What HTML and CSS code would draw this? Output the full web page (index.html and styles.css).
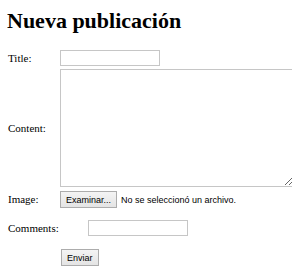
FILE: index.html
```html
<!DOCTYPE html>
<html lang="es">
<head>
    <meta charset="UTF-8">
    <title>Nueva publicación</title>
    <link rel="stylesheet" href="styles.css">
</head>
<body>
    <h1>Nueva publicación</h1>

    <form class="post-form">
        <div class="fields">
            <label for="title">Title:</label>
            <input type="text" id="title" class="text-input">

            <label for="content">Content:</label>
            <textarea id="content"></textarea>

            <label>Image:</label>
            <div class="file-pick">
                <button type="button" class="btn">Examinar...</button>
                <span class="file-name">No se seleccionó un archivo.</span>
            </div>
        </div>

        <div class="comments-row">
            <label for="comments">Comments:</label>
            <input type="text" id="comments" class="text-input">
        </div>

        <div class="submit-row">
            <button type="submit" class="btn">Enviar</button>
        </div>
    </form>
</body>
</html>
```

FILE: styles.css
```css
body {
    font-family: "Liberation Serif", "Times New Roman", serif;
    font-size: 11px;
    color: #000;
    margin: 8px 8px 8px 7px;
    background: #fff;
}
h1 {
    font-size: 22px;
    margin: 0 0 16px;
    line-height: 26px;
}
label {
    padding-left: 1px;
}
.fields {
    display: grid;
    grid-template-columns: 53px auto;
    row-gap: 3px;
    align-items: center;
}
.text-input {
    width: 100px;
    height: 16px;
    box-sizing: border-box;
    border: 1px solid #c6c6c6;
    padding: 0 2px;
    margin: 0;
    font-size: 11px;
}
textarea {
    width: 234px;
    height: 118px;
    box-sizing: border-box;
    border: 1px solid #c6c6c6;
    margin: 0;
    padding: 2px;
}
.file-pick {
    display: flex;
    align-items: center;
    gap: 4px;
    margin-top: 1px;
}
.btn {
    font-family: "Liberation Sans", Arial, sans-serif;
    font-size: 9px;
    color: #000;
    background: linear-gradient(#f4f4f4, #e4e4e4);
    border: 1px solid #acacac;
    height: 17px;
    padding: 0 5px;
    margin: 0;
}
.file-name {
    font-family: "Liberation Sans", Arial, sans-serif;
    font-size: 9px;
}
.comments-row {
    display: grid;
    grid-template-columns: 81px auto;
    align-items: center;
    margin-top: 12px;
}
.submit-row {
    margin: 13px 0 0 54px;
}
```
